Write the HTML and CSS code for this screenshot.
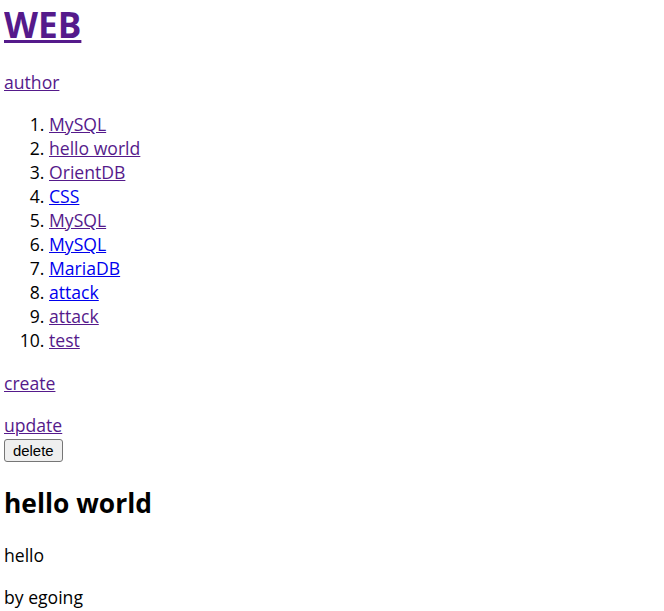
FILE: index.html
```html
<!DOCTYPE html>
<html lang="ko">
<head>
    <meta charset="UTF-8">
    <meta name="viewport" content="width=device-width, initial-scale=1.0">
    <title>WEB - hello world</title>
    <link rel="stylesheet" href="styles.css">
</head>
<body>
    <h1><a href="/" class="visited">WEB</a></h1>
    <p><a href="/author" class="visited">author</a></p>

    <ol class="topics">
        <li><a href="/?id=1" class="visited">MySQL</a></li>
        <li><a href="/?id=2" class="visited">hello world</a></li>
        <li><a href="/?id=3" class="visited">OrientDB</a></li>
        <li><a href="/?id=4">CSS</a></li>
        <li><a href="/?id=5" class="visited">MySQL</a></li>
        <li><a href="/?id=6">MySQL</a></li>
        <li><a href="/?id=7">MariaDB</a></li>
        <li><a href="/?id=8">attack</a></li>
        <li><a href="/?id=9" class="visited">attack</a></li>
        <li><a href="/?id=10" class="visited">test</a></li>
    </ol>

    <p class="control"><a href="/create" class="visited">create</a></p>
    <a href="/update?id=2" class="visited update">update</a>
    <form action="/delete_process" method="post" class="deleteForm">
        <input type="hidden" name="id" value="2">
        <button type="submit">delete</button>
    </form>

    <h2>hello world</h2>
    <p>hello</p>
    <p class="author">by egoing</p>
</body>
</html>
```

FILE: styles.css
```css
body {
    margin: 0 0 0 4px;
    padding-top: 2px;
    font-family: "Open Sans", "Noto Sans CJK KR", sans-serif;
    font-size: 17.6px;
    line-height: 24px;
    color: #000000;
}

a {
    color: #0000ee;
}

a.visited {
    color: #551a8b;
}

h1 {
    margin: 0 0 24px;
    font-size: 35.2px;
    line-height: 44px;
}

p {
    margin: 17.6px 0;
}

.topics {
    margin: 17.6px 0 19px;
    padding-left: 45px;
}

.control {
    margin-top: 19px;
    margin-bottom: 18.6px;
}

.deleteForm {
    margin: 0;
    padding-top: 2px;
}

.deleteForm button {
    display: block;
    height: 23px;
    padding: 0 8px;
    font-family: "Liberation Sans", Arial, sans-serif;
    font-size: 14.9px;
    color: #000000;
    background: #efefef;
    border: 1px solid #767676;
    border-radius: 3px;
}

h2 {
    margin: 23px 0 21.5px;
    font-size: 26.4px;
    line-height: 36px;
}

.author {
    margin-top: 18.6px;
}
```
